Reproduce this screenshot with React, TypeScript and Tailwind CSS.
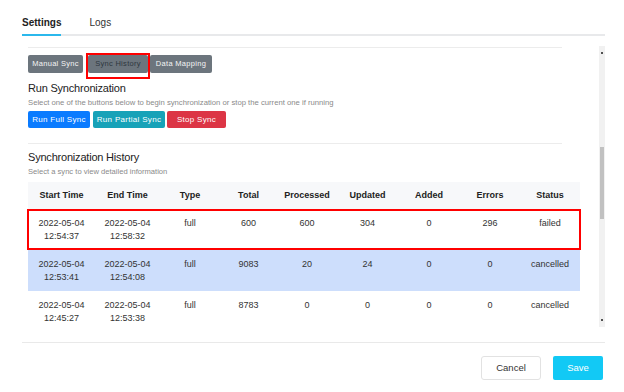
import React from "react";

const font = { fontFamily: '"Liberation Sans", Arial, sans-serif' };

const rows = [
  {
    start: ["2022-05-04", "12:54:37"],
    end: ["2022-05-04", "12:58:32"],
    type: "full",
    total: "600",
    processed: "600",
    updated: "304",
    added: "0",
    errors: "296",
    status: "failed",
    marked: true,
  },
  {
    start: ["2022-05-04", "12:53:41"],
    end: ["2022-05-04", "12:54:08"],
    type: "full",
    total: "9083",
    processed: "20",
    updated: "24",
    added: "0",
    errors: "0",
    status: "cancelled",
    selected: true,
  },
  {
    start: ["2022-05-04", "12:45:27"],
    end: ["2022-05-04", "12:53:38"],
    type: "full",
    total: "8783",
    processed: "0",
    updated: "0",
    added: "0",
    errors: "0",
    status: "cancelled",
  },
];

const headers = ["Start Time", "End Time", "Type", "Total", "Processed", "Updated", "Added", "Errors", "Status"];

const cols = "grid grid-cols-[67px_65px_60px_57px_60px_61px_62px_60px_60px]";

const App: React.FC = () => {
  return (
    <div className="w-[624px] h-[392px] bg-white overflow-hidden text-[#333]" style={font}>
      {/* tabs */}
      <div className="ml-[22px] w-[583px] h-[36px] border-b-2 border-[#e8e9eb] flex items-end gap-[28px]">
        <div className="-mb-[2px] pb-[5px] border-b-2 border-[#2bb8ec] text-[10px] leading-[13px] font-bold text-[#222]">
          Settings
        </div>
        <div className="-mb-[2px] pb-[5px] border-b-2 border-transparent text-[10px] leading-[13px] text-[#333]">
          Logs
        </div>
      </div>

      {/* scroll area */}
      <div className="ml-[22px] w-[583px] h-[281px] mt-[10px] flex">
        <div className="flex-1 overflow-hidden pl-[6px] pt-[1px]">
          <div className="w-[534px] h-[1px] bg-[#ececec]" />

          <div className="mt-[7px] flex text-[7.5px] tracking-[0.3px]">
            <button className="w-[55px] h-[18px] rounded-[2px] bg-[#6c757d] text-[#f4f4f4]">Manual Sync</button>
            <button className="relative ml-[5px] w-[60px] h-[18px] rounded-[2px] bg-[#6c757d] text-[#2e3740]">
              Sync History
              <span className="absolute -left-[2px] -right-[2px] -top-[2px] -bottom-[6px] border-2 border-[#ff0000]" />
            </button>
            <button className="ml-[2px] w-[62px] h-[18px] rounded-[2px] bg-[#6c757d] text-[#f4f4f4]">Data Mapping</button>
          </div>

          <div className="mt-[8px] text-[11px] leading-[15px] tracking-[-0.2px] text-[#222]">Run Synchronization</div>
          <div className="mt-[2px] text-[7.7px] leading-[9px] text-[#8a8a8a]">
            Select one of the buttons below to begin synchronization or stop the current one if running
          </div>

          <div className="mt-[4px] flex text-[8px] tracking-[0.3px] text-white">
            <button className="w-[62px] h-[17px] rounded-[2px] bg-[#0a7bff]">Run Full Sync</button>
            <button className="ml-[3px] w-[72px] h-[17px] rounded-[2px] bg-[#17a2b8]">Run Partial Sync</button>
            <button className="ml-[2px] w-[59px] h-[17px] rounded-[2px] bg-[#dc3545]">Stop Sync</button>
          </div>

          <div className="mt-[15px] w-[534px] h-[1px] bg-[#ececec]" />

          <div className="mt-[6px] text-[11px] leading-[15px] tracking-[-0.2px] text-[#222]">Synchronization History</div>
          <div className="mt-[2px] text-[7.6px] leading-[9px] text-[#8a8a8a]">Select a sync to view detailed information</div>

          {/* table */}
          <div className="mt-[6px] w-[552px] text-[9px] leading-[13px] text-center">
            <div className={`${cols} h-[27px] items-center bg-[#f7f8fa] font-bold text-[#222]`}>
              {headers.map((h) => (
                <div key={h}>{h}</div>
              ))}
            </div>
            {rows.map((r, i) => (
              <div
                key={i}
                className={`${cols} relative h-[41px] pt-[8px] ${r.selected ? "bg-[#cddefc]" : "bg-white"}`}
              >
                <div>
                  <div>{r.start[0]}</div>
                  <div>{r.start[1]}</div>
                </div>
                <div>
                  <div>{r.end[0]}</div>
                  <div>{r.end[1]}</div>
                </div>
                <div>{r.type}</div>
                <div>{r.total}</div>
                <div>{r.processed}</div>
                <div>{r.updated}</div>
                <div>{r.added}</div>
                <div>{r.errors}</div>
                <div>{r.status}</div>
                {r.marked && <span className="absolute -left-[1px] -right-[1px] top-0 bottom-0 border-2 border-[#ff0000]" />}
              </div>
            ))}
          </div>
        </div>

        {/* scrollbar */}
        <div className="w-[6px] bg-[#f1f1f1] flex flex-col items-center">
          <div className="mt-[6px] w-[2px] h-[2px] bg-[#505050]" />
          <div className="mt-[93px] w-[4px] h-[72px] bg-[#c1c1c1]" />
          <div className="flex-1" />
          <div className="mb-[6px] w-[2px] h-[2px] bg-[#505050]" />
        </div>
      </div>

      {/* footer */}
      <div className="ml-[22px] w-[583px] mt-[15px] h-[1px] bg-[#e9e9e9]" />
      <div className="ml-[22px] w-[583px] mt-[13px] flex justify-end gap-[12px] pr-[2px] text-[9.5px]">
        <button className="w-[60px] h-[24px] rounded-[3px] border border-[#e2e2e2] bg-white text-[#333]">Cancel</button>
        <button className="w-[50px] h-[24px] rounded-[2px] bg-[#12c9f5] text-white">Save</button>
      </div>
    </div>
  );
};

export default App;
